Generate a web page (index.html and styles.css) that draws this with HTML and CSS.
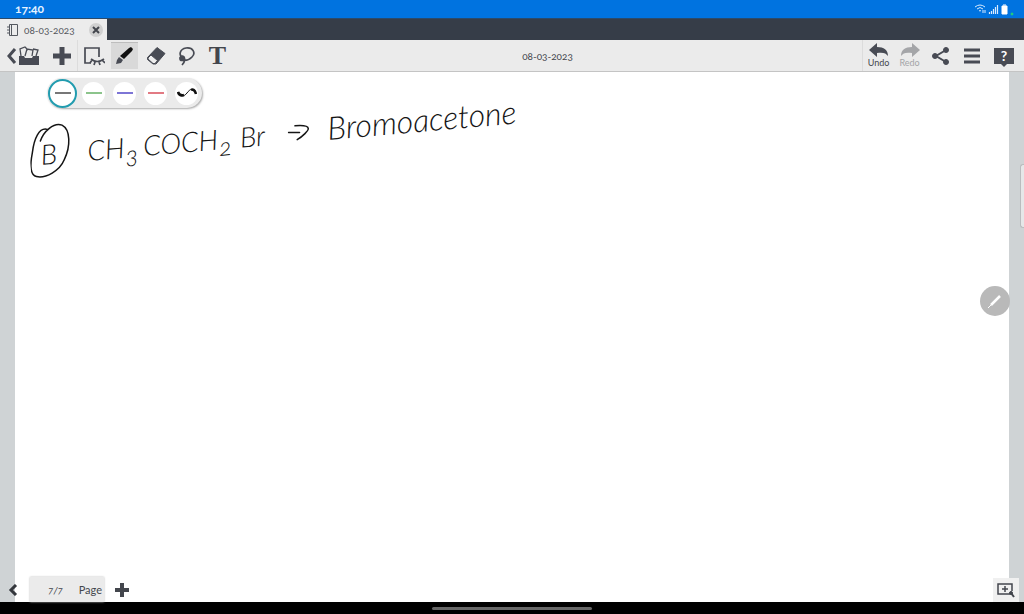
FILE: index.html
```
<!DOCTYPE html>
<html lang="en">
<head>
  <meta charset="UTF-8">
  <title>08-03-2023</title>
  <meta name="viewport" content="width=device-width, initial-scale=1.0">
  <link rel="stylesheet" href="styles.css">
</head>
<body>

<div class="status-bar">
  <span class="clock">17:40</span>
  <svg class="status-icons" width="42" height="14" viewBox="0 0 42 14" fill="none" stroke="#d9ebff">
    <path d="M1 5q5-4 10 0M3 7q3-3 6 0M5 9q1-1 2 0M9 8v3M11 8v3"/>
    <path d="M15.500 12V10M17.500 12V9M19.500 12V7M21.500 12V5M23.500 12V3" stroke-width="1.200"/>
    <path d="M28 4h5v8h-5z" fill="#fff" stroke="#fff"/>
    <path d="M29 3h3" stroke="#fff"/>
    <circle cx="38" cy="12" r="1" fill="#25d07a" stroke="#25d07a"/>
  </svg>
</div>

<!-- open notes -->
<nav class="tabs">
  <div class="tab">
    <svg width="12" height="14" viewBox="0 0 12 14" fill="none" stroke="#555960">
      <path d="M2.500 1.500h8v11h-8zM4.500 1.500v11M0 4h3M0 7h3M0 10h3"/>
    </svg>
    <a class="tab-name" href="#sheet">08-03-2023</a>
    <button class="tab-close" aria-label="Close tab">
      <svg width="8" height="8" viewBox="0 0 8 8" stroke="#43464d" stroke-width="2"><path d="M1 1l6 6M7 1L1 7"/></svg>
    </button>
  </div>
</nav>

<header class="toolbar">
  <div class="tools">
    <button class="tool library" aria-label="Back to library">
      <svg width="36" height="24" viewBox="0 0 36 24" fill="none" stroke="#484b54">
        <path d="M10 5L4 12l6 7" stroke-width="3"/>
        <path d="M16 12l-1-7 5-2 3 3M20 12l2-7 6 1-1 6M28 5l5 1-2 6" stroke-width="1.300"/>
        <path d="M14 12h5l1 2h7l1-2h6v9H14z" fill="#484b54" stroke="none"/>
      </svg>
    </button>
    <button class="tool add" aria-label="Add">
      <svg width="18" height="18" viewBox="0 0 18 18" fill="#484b54"><path d="M6.500 0h5v6.500H18v5h-6.500V18h-5v-6.500H0v-5h6.500z"/></svg>
    </button>
    <button class="tool" aria-label="Read only">
      <svg width="22" height="22" viewBox="0 0 22 22" fill="none" stroke="#484b54">
        <path d="M8 18H2V3h14v9" stroke-width="1.700"/>
        <path d="M8 14q6 5 13 0M9 15l-2 3M12 17l-1 3M16 17l1 3M19 15l3 3" stroke-width="1.700"/>
      </svg>
    </button>
    <button class="tool active" aria-label="Pen">
      <svg width="20" height="20" viewBox="0 0 20 20">
        <path d="M14 2l2-1 2 2-1 2-8 8-4-3z" fill="#111"/>
        <path d="M4 11l4 3-2 3-5 1 1-4z" fill="#484b54"/>
      </svg>
    </button>
    <button class="tool" aria-label="Eraser">
      <svg width="20" height="20" viewBox="0 0 20 20" stroke="#484b54">
        <path d="M11 1.500l8 6-9 10.500H7l-5.500-4.500v-2z" fill="#484b54"/>
        <path d="M5 9l6.500 5.500L9 17.500H7L2 13v-1z" fill="#eee"/>
      </svg>
    </button>
    <button class="tool" aria-label="Lasso">
      <svg width="18" height="20" viewBox="0 0 18 20" fill="none" stroke="#484b54" stroke-width="1.700">
        <path d="M5 12C0 9 2 3 8 2c7-1 10 5 6 9-3 3-7 4-10 3-2-1-2-4 0-4 3 0 4 5 0 9"/>
        <circle cx="4" cy="12.500" r="2" fill="#484b54"/>
      </svg>
    </button>
    <button class="tool text-tool" aria-label="Text">T</button>
  </div>

  <h1 class="title">08-03-2023</h1>

  <div class="tools actions">
    <button class="tool labelled">
      <svg width="20" height="15" viewBox="0 0 20 15" fill="#484b54"><path d="M0 7l8-7v4c7 0 11 3 11 9-2-3-5-4-11-3v4z"/></svg>
      <span>Undo</span>
    </button>
    <button class="tool labelled" disabled>
      <svg width="20" height="15" viewBox="0 0 20 15" fill="#a4a5a8"><path d="M20 7l-8-7v4C5 4 1 7 1 13c2-3 5-4 11-3v4z"/></svg>
      <span>Redo</span>
    </button>
    <button class="tool" aria-label="Share">
      <svg width="18" height="18" viewBox="0 0 18 18" fill="#484b54" stroke="#484b54">
        <path d="M14 3L4 9l10 6" fill="none" stroke-width="2"/>
        <circle cx="14" cy="3" r="2.500"/><circle cx="3" cy="9" r="2.500"/><circle cx="14" cy="15" r="2.500"/>
      </svg>
    </button>
    <button class="tool" aria-label="Menu">
      <svg width="16" height="16" viewBox="0 0 16 16" stroke="#484b54" stroke-width="3"><path d="M0 2h16M0 8h16M0 14h16"/></svg>
    </button>
    <button class="tool help" aria-label="Help"><span class="bubble">?</span></button>
  </div>
</header>

<main class="desk">
  <div class="sheet" id="sheet">

    <!-- handwritten line -->
    <div class="ink">
      <svg class="ring" width="44" height="58" viewBox="0 0 44 58" fill="none" stroke="#151515" stroke-width="1.500" stroke-linecap="round">
        <path d="M20 6C12 3 6 14 3 28C-1 42-1 50 5 52C14 55 29 48 34 38C42 25 43 8 35 3C27-1 16 8 12 17"/>
      </svg>
      <span class="mark">B</span>
      <span class="ch">CH<sub>3</sub></span>
      <span class="coch">COCH<sub>2</sub></span>
      <span class="br">Br</span>
      <svg class="arrow" width="24" height="20" viewBox="0 0 24 20" fill="none" stroke="#151515" stroke-width="1.500" stroke-linecap="round">
        <path d="M1 9l11 1M8 3c6 0 13 1 13 4 0 2-6 7-12 10"/>
      </svg>
      <span class="word">Bromoacetone</span>
    </div>

    <div class="pens">
      <button class="pen selected black" aria-label="Black pen"><i></i></button>
      <button class="pen green" aria-label="Green pen"><i></i></button>
      <button class="pen blue" aria-label="Blue pen"><i></i></button>
      <button class="pen red" aria-label="Red pen"><i></i></button>
      <button class="pen" aria-label="Stroke style">
        <svg width="20" height="12" viewBox="0 0 20 12" fill="none" stroke="#111">
          <path d="M1 5c2 5 6 5 9 1s6-6 9 1" stroke-width="1"/>
          <path d="M1 5c1 3 3 4 6 3M14 3c2-1 4 0 5 4" stroke-width="2.500"/>
        </svg>
      </button>
    </div>
  </div>

  <div class="scroll-handle"></div>
  <button class="float-pen" aria-label="Pen mode">
    <svg width="16" height="16" viewBox="0 0 16 16" stroke="#fff"><path d="M4 12l9-9" stroke-width="2.500"/><path d="M1 15l4-4" stroke-width="1"/></svg>
  </button>

  <footer class="pager">
    <button class="prev" aria-label="Previous page">
      <svg width="10" height="12" viewBox="0 0 10 12" fill="none" stroke="#33363c" stroke-width="3"><path d="M8 1L3 6l5 5"/></svg>
    </button>
    <div class="page-box"><span class="count">7/7</span><span class="label">Page</span></div>
    <button class="add-page" aria-label="Add page">
      <svg width="14" height="14" viewBox="0 0 14 14" fill="#43464d"><path d="M5 0h4v5h5v4H9v5H5V9H0V5h5z"/></svg>
    </button>
  </footer>

  <button class="zoom" aria-label="Zoom">
    <svg width="20" height="16" viewBox="0 0 20 16" fill="none" stroke="#43464d">
      <path d="M14 12H2V2h14v7" stroke-width="1.500"/>
      <path d="M6 7h6M9 4v6" stroke-width="1.500"/>
      <circle cx="15" cy="11" r="1.500" fill="#43464d"/><path d="M15 11l3 4" stroke-width="2"/>
    </svg>
  </button>
</main>

<div class="nav-bar"><span class="gesture"></span></div>

</body>
</html>
```
FILE: styles.css
```
* {
  box-sizing: border-box;
}

body {
  margin: 0;
  height: 100vh;
  display: flex;
  flex-direction: column;
  font-family: Lato, "Liberation Sans", sans-serif;
  font-variant-numeric: oldstyle-nums;
  color: #43464d;
  overflow: hidden;
}

button {
  display: flex;
  align-items: center;
  justify-content: center;
  padding: 0;
  border: none;
  background: none;
  font-family: inherit;
  color: inherit;
  cursor: pointer;
}

svg {
  display: block;
  flex: none;
}

/* system bar */
.status-bar {
  display: flex;
  align-items: center;
  justify-content: space-between;
  height: 18px;
  padding: 0 8px 0 15px;
  background: #0073e0;
  color: #e8f3ff;
}

.clock {
  font-size: 12px;
  font-weight: bold;
  line-height: 18px;
}

/* tabs */
.tabs {
  display: flex;
  height: 22px;
  background: #363d48;
  border-top: 1px solid #2b4a6b;
}

.tab {
  display: flex;
  align-items: center;
  width: 107px;
  padding: 0 4px 0 7px;
  background: #ececec;
}

.tab-name {
  flex: 1;
  margin-left: 5px;
  font-size: 10px;
  color: #55585e;
  text-decoration: none;
}

.tab-close {
  width: 14px;
  height: 14px;
  border-radius: 50%;
  background: #d0d0d0;
}

/* toolbar */
.toolbar {
  display: flex;
  align-items: center;
  height: 32px;
  background: #ebebeb;
  border-bottom: 1px solid #c4c4c4;
}

.tools {
  display: flex;
  height: 100%;
  align-items: center;
}

.tool {
  width: 31px;
  height: 100%;
}

.tool.library {
  width: 46px;
}

.tool.add {
  width: 32px;
  border-right: 1px solid #dcdcdc;
}

.tool.active {
  width: 27px;
  height: 27px;
  margin: 0 2px;
  background: #d9d9d9;
  border-top: 1px solid #bdbdbd;
}

.text-tool {
  font-family: "Liberation Serif", serif;
  font-size: 26px;
  font-weight: bold;
}

.title {
  flex: 1;
  margin: 0;
  font-size: 10px;
  font-weight: normal;
  text-align: center;
}

.actions {
  padding-right: 3px;
  border-left: 1px solid #dcdcdc;
}

.tool.labelled {
  flex-direction: column;
  font-size: 9px;
  line-height: 10px;
}

.tool:disabled {
  color: #a4a5a8;
}

.tool.help {
  width: 34px;
}

.bubble {
  position: relative;
  width: 20px;
  height: 16px;
  background: #484b54;
  color: #fff;
  font-size: 14px;
  font-weight: bold;
  line-height: 16px;
}

.bubble::after {
  content: "";
  position: absolute;
  left: 7px;
  top: 16px;
  border: 3px solid transparent;
  border-top-color: #484b54;
}

/* note */
.desk {
  position: relative;
  flex: 1;
  display: flex;
  padding: 0 15px;
  background: #cfd3d5;
}

.sheet {
  position: relative;
  flex: 1;
  background: #fff;
}

.pens {
  position: absolute;
  left: 32px;
  top: 6px;
  display: flex;
  align-items: center;
  height: 30px;
  border-radius: 15px;
  background: #ebebeb;
  box-shadow: 1px 1px 2px #aaa;
}

.pen {
  width: 23px;
  height: 23px;
  margin: 0 4px;
  border-radius: 50%;
  background: #fff;
}

.pen.selected {
  width: 29px;
  height: 29px;
  margin: 0 1px;
  border: 2px solid #229caf;
}

.pen i {
  width: 16px;
  height: 2px;
}

.black i { background: #777; }
.green i { background: #8cc48c; }
.blue i { background: #7d75d6; }
.red i { background: #e27a83; }

.ink {
  position: absolute;
  left: 16px;
  top: 65px;
  display: flex;
  align-items: baseline;
  color: #151515;
  font-size: 28px;
  font-style: italic;
  font-weight: 300;
  line-height: 34px;
  white-space: nowrap;
  transform: rotate(-5deg);
  transform-origin: 0 100%;
}

.ink sub {
  font-size: 24px;
  line-height: 0;
}

.word {
  font-size: 32px;
}

.ring {
  position: absolute;
  left: 0;
  top: -12px;
}

.mark {
  width: 58px;
  padding-left: 11px;
}

.ch {
  width: 56px;
}

.coch {
  width: 97px;
}

.br {
  width: 48px;
}

.arrow {
  margin-right: 16px;
}

/* overlays */
.scroll-handle {
  position: absolute;
  right: 0;
  top: 92px;
  width: 4px;
  height: 64px;
  background: #e5e7e8;
  border: 1px solid #b9bcbe;
  border-right: none;
  border-radius: 3px 0 0 3px;
}

.float-pen {
  position: absolute;
  right: 14px;
  top: 214px;
  width: 30px;
  height: 30px;
  border-radius: 50%;
  background: #b9b9b9;
}

.pager {
  position: absolute;
  left: 0;
  bottom: 0;
  display: flex;
  align-items: center;
  height: 25px;
}

.prev {
  width: 30px;
  padding-right: 4px;
}

.page-box {
  display: flex;
  align-items: center;
  justify-content: space-between;
  width: 74px;
  height: 25px;
  padding: 0 2px 0 18px;
  background: #ebebeb;
  box-shadow: 0 0 2px #bbb;
}

.count {
  font-size: 10px;
  font-style: italic;
}

.label {
  font-size: 11px;
}

.add-page {
  width: 35px;
}

.zoom {
  position: absolute;
  right: 5px;
  bottom: 0;
  width: 26px;
  height: 24px;
  background: #f0f0f0;
}

/* gesture bar */
.nav-bar {
  display: flex;
  align-items: center;
  justify-content: center;
  height: 12px;
  background: #000;
}

.gesture {
  width: 160px;
  height: 3px;
  border-radius: 2px;
  background: #666;
}
```
